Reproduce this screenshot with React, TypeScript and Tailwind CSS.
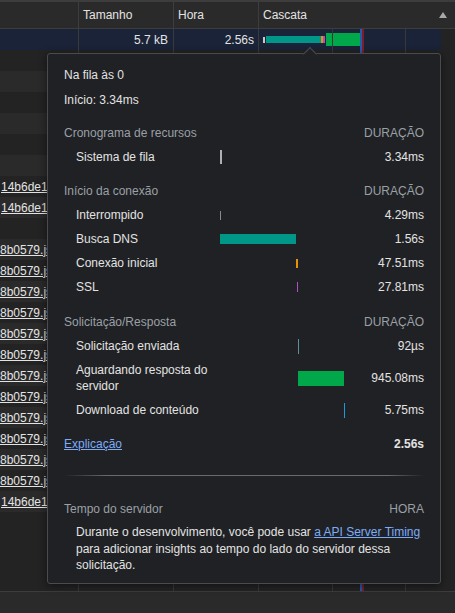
import React from "react";

const A = "14b6de1f.chunk.js";
const B = "8b0579.js";
const names: (string | null)[] = [
  null, null, null, null, null, null, A, A, null,
  B, B, B, B, B, B, B, B, B, B, B, B, A,
];

function TimingRow({
  label,
  value,
  bar,
}: {
  label: string;
  value: string;
  bar: React.ReactNode;
}) {
  return (
    <div className="mt-[8px] flex items-center">
      <div className="w-[156px] pl-[12px] pr-[6px]">{label}</div>
      <div className="flex w-[125px] items-center">{bar}</div>
      <div className="flex-1 text-right">{value}</div>
    </div>
  );
}

function Section({ title, right, first }: { title: string; right: string; first: string }) {
  return (
    <div className={`${first} flex justify-between text-[#9aa0a6]`}>
      <span>{title}</span>
      <span>{right}</span>
    </div>
  );
}

export default function App() {
  return (
    <div className="relative flex h-[613px] w-[455px] flex-col overflow-hidden bg-[#232323] font-['Liberation_Sans',Arial,sans-serif] text-xs leading-4 text-[#e3e3e3]">
      {/* header */}
      <div className="grid h-[29px] shrink-0 grid-cols-[78px_95px_85px_1fr] border-t-2 border-b border-[#3d3d3d] bg-[#2a2a2a]">
        <div />
        <div className="flex items-center border-l border-[#3d3d3d] pl-[4px]">Tamanho</div>
        <div className="flex items-center border-l border-[#3d3d3d] pl-[4px]">Hora</div>
        <div className="flex items-center border-l border-[#3d3d3d] pl-[4px]">
          <span>Cascata</span>
          <svg className="ml-auto mr-[8px]" width="8" height="6" viewBox="0 0 8 6">
            <polygon points="4,0 8,6 0,6" fill="#a8a8a8" />
          </svg>
        </div>
      </div>

      {/* body */}
      <div className="relative flex flex-1 flex-col">
        <div className="grid h-[21px] w-[441px] grid-cols-[78px_95px_85px_183px] bg-[#1a2337]">
          <div />
          <div className="flex items-center justify-end pr-[5px]">5.7 kB</div>
          <div className="flex items-center justify-end pr-[4px]">2.56s</div>
          <div className="flex items-center">
            <div className="ml-[5px] h-[6px] w-[2px] bg-[#c8c8c8]" />
            <div className="ml-[1px] h-[7px] w-[55px] bg-[#009688]" />
            <div className="h-[7px] w-[2px] bg-[#e8900c]" />
            <div className="h-[7px] w-[2px] bg-[#b04fc4]" />
            <div className="ml-[1px] h-[13px] w-[34px] bg-[#00a84a]" />
            <div className="h-[13px] w-[2px] bg-[#1a9ae0]" />
          </div>
        </div>
        {names.map((n, i) => (
          <div
            key={i}
            className={`flex h-[21px] w-[441px] items-center ${
              i % 2 === 0 ? "bg-[#232323]" : "bg-[#2a2a2a]"
            }`}
          >
            {n && (
              <div className="w-[47px] overflow-hidden">
                <span className={`${n === A ? "ml-[1px]" : ""} block whitespace-nowrap underline`}>{n}</span>
              </div>
            )}
          </div>
        ))}
        <div className="flex-1" />

        {/* column grid lines */}
        <div className="absolute top-0 bottom-0 left-[78px] w-px bg-[#3a3a3a]" />
        <div className="absolute top-0 bottom-0 left-[173px] w-px bg-[#3a3a3a]" />
        <div className="absolute top-0 bottom-0 left-[258px] w-px bg-[#3a3a3a]" />
        <div className="absolute top-0 bottom-0 left-[332px] w-px bg-[#383838]" />
        <div className="absolute top-0 bottom-0 left-[405px] w-px bg-[#383838]" />
        <div className="absolute top-0 bottom-0 left-[360px] w-[2px] bg-[#2a58ad]" />
        <div className="absolute top-0 bottom-0 left-[362px] w-[2px] bg-[#7c1f2c]" />
      </div>

      {/* bottom bar */}
      <div className="h-[22px] shrink-0 border-t border-[#3d3d3d] bg-[#2a2a2a]" />

      {/* popup */}
      <div className="absolute top-[53px] left-[47px] h-[531px] w-[394px] rounded-[3px] border border-[#4a4b4e] bg-[#202124] px-[16px] pt-[13px] shadow-[0_2px_8px_rgba(0,0,0,0.5)]">
        <div className="absolute top-[-5px] left-[257px] h-[10px] w-[10px] rotate-45 border-t border-l border-[#4a4b4e] bg-[#202124]" />
        <div>Na fila às 0</div>
        <div className="mt-[9px]">Início: 3.34ms</div>

        <Section first="mt-[17px]" title="Cronograma de recursos" right="DURAÇÃO" />
        <TimingRow label="Sistema de fila" value="3.34ms" bar={<div className="h-[14px] w-[2px] bg-[#b0b0b0]" />} />

        <Section first="mt-[18px]" title="Início da conexão" right="DURAÇÃO" />
        <TimingRow label="Interrompido" value="4.29ms" bar={<div className="h-[9px] w-px bg-[#8a8a8a]" />} />
        <TimingRow label="Busca DNS" value="1.56s" bar={<div className="h-[10px] w-[76px] bg-[#009688]" />} />
        <TimingRow label="Conexão inicial" value="47.51ms" bar={<div className="ml-[76px] h-[9px] w-[2px] bg-[#e8900c]" />} />
        <TimingRow label="SSL" value="27.81ms" bar={<div className="ml-[77px] h-[10px] w-px bg-[#b04fc4]" />} />

        <Section first="mt-[19px]" title="Solicitação/Resposta" right="DURAÇÃO" />
        <TimingRow label="Solicitação enviada" value="92µs" bar={<div className="ml-[78px] h-[15px] w-px bg-[#5f9095]" />} />
        <TimingRow label="Aguardando resposta do servidor" value="945.08ms" bar={<div className="ml-[78px] h-[15px] w-[46px] bg-[#00a84a]" />} />
        <TimingRow label="Download de conteúdo" value="5.75ms" bar={<div className="ml-[124px] h-[15px] w-px bg-[#1a9ae0]" />} />

        <div className="mt-[18px] flex justify-between">
          <span className="text-[#7cacf8] underline">Explicação</span>
          <span className="font-bold">2.56s</span>
        </div>

        <div className="mt-[23px] h-px bg-[linear-gradient(to_right,transparent,#6a6a6a_12%,#6a6a6a_90%,transparent)]" />

        <Section first="mt-[25px]" title="Tempo do servidor" right="HORA" />
        <p className="mt-[7px] pl-[12px] leading-[16.5px]">
          Durante o desenvolvimento, você pode usar{" "}
          <span className="text-[#7cacf8] underline">a API Server Timing</span> para adicionar insights ao tempo
          do lado do servidor dessa solicitação.
        </p>
      </div>
    </div>
  );
}
